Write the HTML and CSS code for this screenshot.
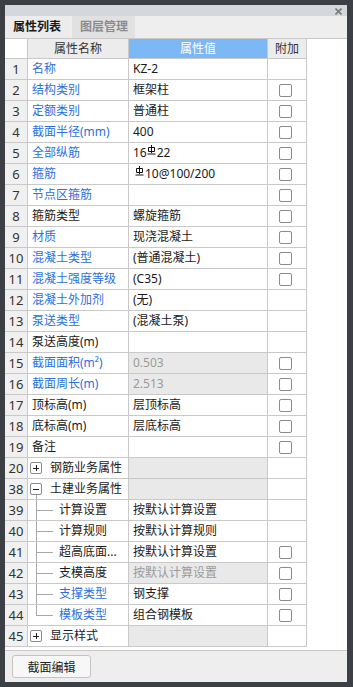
FILE: index.html
```html
<!DOCTYPE html>
<html lang="zh-CN">
<head>
<meta charset="utf-8">
<title>属性列表</title>
<link rel="stylesheet" href="styles.css">
</head>
<body>
<div class="window">
  <div class="titlebar">
    <svg class="close" width="7" height="7" viewBox="0 0 7 7"><path d="M0.5 0.5L6.5 6.5M6.5 0.5L0.5 6.5" stroke="#7a7a7a" stroke-width="1.6"/></svg>
  </div>
  <div class="tabs">
    <div class="tab active">属性列表</div>
    <div class="tab">图层管理</div>
  </div>
  <div class="grid-area">
    <div class="grid">
      <div class="row head"><div class="c num"></div><div class="c name">属性名称</div><div class="c val">属性值</div><div class="c add">附加</div></div>
      <div class="row"><div class="c num">1</div><div class="c name blue">名称</div><div class="c val">KZ-2</div><div class="c add"></div></div>
      <div class="row"><div class="c num">2</div><div class="c name blue">结构类别</div><div class="c val">框架柱</div><div class="c add"><span class="cb"></span></div></div>
      <div class="row"><div class="c num">3</div><div class="c name blue">定额类别</div><div class="c val">普通柱</div><div class="c add"><span class="cb"></span></div></div>
      <div class="row"><div class="c num">4</div><div class="c name blue">截面半径(mm)</div><div class="c val">400</div><div class="c add"><span class="cb"></span></div></div>
      <div class="row"><div class="c num">5</div><div class="c name blue">全部纵筋</div><div class="c val">16<svg class="rebar" width="9" height="10" viewBox="0 0 9 10"><path d="M4.5 0V8M1.5 2.5H7.5V6.5H1.5ZM0.5 9H8.5" stroke="#111" stroke-width="1" fill="none"/></svg>22</div><div class="c add"><span class="cb"></span></div></div>
      <div class="row"><div class="c num">6</div><div class="c name blue">箍筋</div><div class="c val"><svg class="rebar lead" width="9" height="10" viewBox="0 0 9 10"><path d="M4.5 0V8M1.5 2.5H7.5V6.5H1.5ZM0.5 9H8.5" stroke="#111" stroke-width="1" fill="none"/></svg>10@100/200</div><div class="c add"><span class="cb"></span></div></div>
      <div class="row"><div class="c num">7</div><div class="c name blue">节点区箍筋</div><div class="c val"></div><div class="c add"><span class="cb"></span></div></div>
      <div class="row"><div class="c num">8</div><div class="c name">箍筋类型</div><div class="c val">螺旋箍筋</div><div class="c add"><span class="cb"></span></div></div>
      <div class="row"><div class="c num">9</div><div class="c name blue">材质</div><div class="c val">现浇混凝土</div><div class="c add"><span class="cb"></span></div></div>
      <div class="row"><div class="c num">10</div><div class="c name blue">混凝土类型</div><div class="c val">(普通混凝土)</div><div class="c add"><span class="cb"></span></div></div>
      <div class="row"><div class="c num">11</div><div class="c name blue">混凝土强度等级</div><div class="c val">(C35)</div><div class="c add"><span class="cb"></span></div></div>
      <div class="row"><div class="c num">12</div><div class="c name blue">混凝土外加剂</div><div class="c val">(无)</div><div class="c add"></div></div>
      <div class="row"><div class="c num">13</div><div class="c name blue">泵送类型</div><div class="c val">(混凝土泵)</div><div class="c add"></div></div>
      <div class="row"><div class="c num">14</div><div class="c name">泵送高度(m)</div><div class="c val"></div><div class="c add"></div></div>
      <div class="row"><div class="c num">15</div><div class="c name blue">截面面积(m²)</div><div class="c val ro">0.503</div><div class="c add"><span class="cb"></span></div></div>
      <div class="row"><div class="c num">16</div><div class="c name blue">截面周长(m)</div><div class="c val ro">2.513</div><div class="c add"><span class="cb"></span></div></div>
      <div class="row"><div class="c num">17</div><div class="c name">顶标高(m)</div><div class="c val">层顶标高</div><div class="c add"><span class="cb"></span></div></div>
      <div class="row"><div class="c num">18</div><div class="c name">底标高(m)</div><div class="c val">层底标高</div><div class="c add"><span class="cb"></span></div></div>
      <div class="row"><div class="c num">19</div><div class="c name">备注</div><div class="c val"></div><div class="c add"><span class="cb"></span></div></div>
      <div class="row"><div class="c num">20</div><div class="c name tree"><span class="tog plus"></span>钢筋业务属性</div><div class="c val ro"></div><div class="c add"></div></div>
      <div class="row"><div class="c num">38</div><div class="c name tree open"><span class="tog"></span>土建业务属性</div><div class="c val ro"></div><div class="c add"></div></div>
      <div class="row"><div class="c num">39</div><div class="c name child"><span class="branch"></span>计算设置</div><div class="c val">按默认计算设置</div><div class="c add"></div></div>
      <div class="row"><div class="c num">40</div><div class="c name child"><span class="branch"></span>计算规则</div><div class="c val">按默认计算规则</div><div class="c add"></div></div>
      <div class="row"><div class="c num">41</div><div class="c name child"><span class="branch"></span>超高底面...</div><div class="c val">按默认计算设置</div><div class="c add"><span class="cb"></span></div></div>
      <div class="row"><div class="c num">42</div><div class="c name child"><span class="branch"></span>支模高度</div><div class="c val ro">按默认计算设置</div><div class="c add"><span class="cb"></span></div></div>
      <div class="row"><div class="c num">43</div><div class="c name child blue"><span class="branch"></span>支撑类型</div><div class="c val">钢支撑</div><div class="c add"><span class="cb"></span></div></div>
      <div class="row"><div class="c num">44</div><div class="c name child blue"><span class="branch last"></span>模板类型</div><div class="c val">组合钢模板</div><div class="c add"><span class="cb"></span></div></div>
      <div class="row"><div class="c num">45</div><div class="c name tree"><span class="tog plus"></span>显示样式</div><div class="c val ro"></div><div class="c add"></div></div>
    </div>
  </div>
  <div class="footer">
    <button class="btn">截面编辑</button>
  </div>
</div>
</body>
</html>
```

FILE: styles.css
```css
html, body {
  margin: 0;
  height: 100%;
}
body {
  background: #3c3f43;
  padding: 5px 0 0 5px;
  box-sizing: border-box;
  font-family: "Noto Sans", "Noto Sans CJK SC", sans-serif;
  font-size: 12px;
  color: #1a1a1a;
}
.window {
  width: 342px;
  height: 677px;
  background: #eeeeee;
  display: flex;
  flex-direction: column;
}
.titlebar {
  height: 11px;
  flex: none;
  background: #d6d7da;
  display: flex;
  justify-content: flex-end;
  align-items: center;
  padding-right: 5px;
}
.close { display: block; margin-top: 2px; }
.tabs {
  height: 22px;
  flex: none;
  display: flex;
  gap: 2px;
  background: #eeeeee;
}
.tab {
  box-sizing: border-box;
  width: 63px;
  padding-left: 8px;
  line-height: 22px;
  font-weight: bold;
  color: #8c8c8c;
  background: #e1e1e1;
  white-space: nowrap;
}
.tab.active {
  width: 65px;
  color: #1a1a1a;
  background: #ececec;
}
.grid-area {
  flex: 1;
  background: #ffffff;
  border-top: 1px solid #c9c9c9;
  border-bottom: 1px solid #c9c9c9;
  overflow: hidden;
}
.grid { width: 302px; }
.row {
  display: grid;
  grid-template-columns: 23px 101px 139px 39px;
  height: 21px;
}
.row.head { height: 20px; }
.c {
  box-sizing: border-box;
  border-right: 1px solid #c9c9c9;
  border-bottom: 1px solid #c9c9c9;
  line-height: 20px;
  white-space: nowrap;
  overflow: hidden;
}
.head .c { line-height: 19px; }
.num {
  background: #f0f0f0;
  text-align: center;
  color: #333;
  font-size: 13px;
}
.head .num { background: #ffffff; }
.name { padding-left: 4px; }
.val { padding-left: 4px; }
.head .name {
  padding: 0;
  text-align: center;
  background: #ececec;
  color: #333;
}
.head .val {
  padding: 0;
  text-align: center;
  background: #7cb8f6;
  color: #ffffff;
}
.add {
  display: flex;
  align-items: center;
  padding-left: 11px;
}
.head .add {
  justify-content: center;
  padding-left: 0;
  background: #ececec;
  color: #333;
}
.blue { color: #2d6fe0; }
.ro {
  background: #e9e9e9;
  color: #9b9b9b;
}
.cb {
  width: 13px;
  height: 13px;
  box-sizing: border-box;
  border: 1px solid #8c8c8c;
  border-radius: 2px;
  background: #ffffff;
}
.rebar {
  vertical-align: 2px;
  margin: 0 1px 0 0;
}
.rebar.lead { margin-left: 2px; }
.tree {
  display: flex;
  align-items: center;
  padding-left: 2px;
}
.tree.open {
  background: linear-gradient(#a8a8a8, #a8a8a8) 8px 16px / 1px 5px no-repeat;
}
.tog {
  width: 12px;
  height: 12px;
  box-sizing: border-box;
  border: 1px solid #8a8a8a;
  border-radius: 2px;
  margin-right: 8px;
  background:
    linear-gradient(#222, #222) center / 6px 1px no-repeat,
    #ffffff;
}
.tog.plus {
  background:
    linear-gradient(#222, #222) center / 6px 1px no-repeat,
    linear-gradient(#222, #222) center / 1px 6px no-repeat,
    #ffffff;
}
.child {
  display: flex;
  padding-left: 8px;
}
.branch {
  width: 17px;
  margin-right: 6px;
  flex: none;
  background:
    linear-gradient(#a8a8a8, #a8a8a8) 0 0 / 1px 100% no-repeat,
    linear-gradient(#a8a8a8, #a8a8a8) 0 10px / 100% 1px no-repeat;
}
.branch.last {
  background:
    linear-gradient(#a8a8a8, #a8a8a8) 0 0 / 1px 11px no-repeat,
    linear-gradient(#a8a8a8, #a8a8a8) 0 10px / 100% 1px no-repeat;
}
.footer {
  height: 31px;
  flex: none;
  box-sizing: border-box;
  padding: 4px 0 0 7px;
  background: #eeeeee;
}
.btn {
  width: 79px;
  height: 23px;
  padding: 0;
  border: 1px solid #c4c4c4;
  border-radius: 3px;
  background: #f7f7f7;
  font: inherit;
  color: #222;
}
```
